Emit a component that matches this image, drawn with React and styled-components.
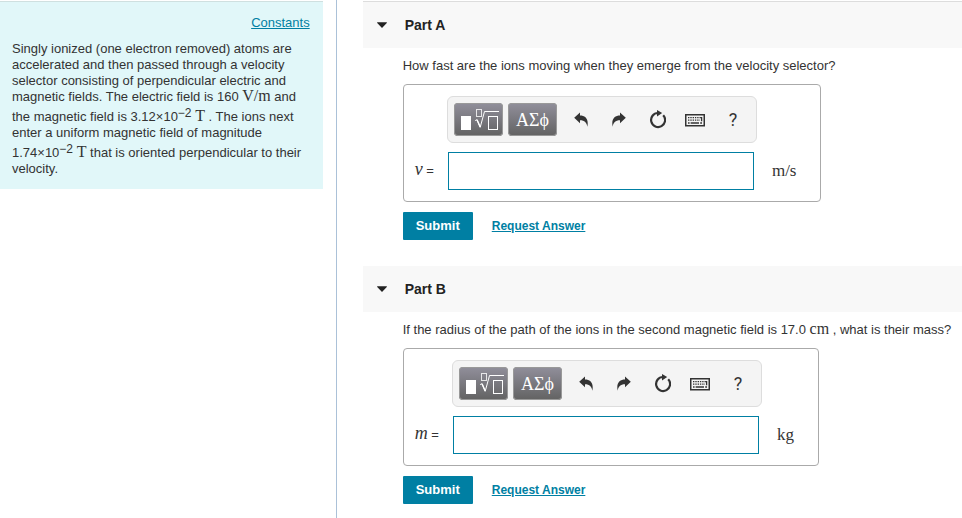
import React from 'react';
import styled, { createGlobalStyle } from 'styled-components';

const sans = '"Liberation Sans", Arial, sans-serif';
const serif = '"Liberation Serif", "Times New Roman", serif';

//

const UndoIcon = () => (
  <svg width="14" height="16" viewBox="0 0 14 16" aria-hidden="true">
    <path
      fill="currentColor"
      d="M0.2 5.7L6 0.4v3.2c5.2 0 9 3.4 7.3 11.2C12.8 10.6 10.6 8.2 6 8.2v3z"
    />
  </svg>
);

const RedoIcon = () => (
  <svg width="14" height="16" viewBox="0 0 14 16" aria-hidden="true">
    <path
      fill="currentColor"
      d="M13.8 5.7L8 0.4v3.2c-5.2 0-9 3.4-7.3 11.2C1.2 10.6 3.4 8.2 8 8.2v3z"
    />
  </svg>
);

const ResetIcon = () => (
  <svg width="18" height="20" viewBox="-1 1 18 20" aria-hidden="true">
    <path
      fill="none"
      stroke="currentColor"
      strokeWidth="2.2"
      d="M14.2 6.2A7 7 0 1 1 9 4"
    />
    <path fill="currentColor" d="M8 1l5.2 3L8 7.4z" />
  </svg>
);

const KeyboardIcon = () => (
  <svg width="20" height="15" viewBox="0 -2 20 15" aria-hidden="true">
    <rect
      x="0.75"
      y="0.75"
      width="18.5"
      height="11"
      fill="none"
      stroke="currentColor"
      strokeWidth="1.5"
    />
    <g fill="none" stroke="currentColor" strokeWidth="1.3">
      <path strokeDasharray="1.4 0.9" d="M3 3.6h13" />
      <path strokeDasharray="1.4 0.9" d="M3 6.2h12" />
      <path d="M16.6 3v4.2M3 9h1.6M5.6 9h8.4M15.2 9h1.8" />
    </g>
  </svg>
);

const TemplateIcon = () => (
  <svg width="49" height="33" viewBox="0 0 49 33" aria-hidden="true">
    <rect x="7" y="13" width="10" height="14" fill="#fff" />
    <g fill="none" stroke="#fff">
      <rect x="22.5" y="6.5" width="5" height="7" strokeOpacity="0.8" />
      <path d="M21.2 17.6l1.8-0.9 3.2 7.6L30.5 8.5H45" />
      <path strokeWidth="1.4" d="M23 16.8l3.2 7.2" />
      <rect x="34.5" y="13.5" width="9" height="13" />
    </g>
  </svg>
);

const CaretIcon = () => (
  <svg width="10" height="6" viewBox="0 0 10 6" aria-hidden="true">
    <path
      fill="currentColor"
      d="M0.4 0.2h9.2q0.6 0.2 0.2 0.7L5 5.9 0.2 0.9q-0.4-0.5 0.2-0.7z"
    />
  </svg>
);

//

const Part = ({ id, title, variable, unit, ruled, children }) => (
  <section>
    <PartHeader $ruled={ruled}>
      <Toggle type="button" aria-label={`Collapse ${title}`}>
        <CaretIcon />
      </Toggle>
      <PartTitle>{title}</PartTitle>
    </PartHeader>

    <PartBody>
      <Question>{children}</Question>

      <AnswerBox>
        <Toolbar>
          <PaletteButton type="button" aria-label="Templates">
            <TemplateIcon />
          </PaletteButton>
          <PaletteButton type="button">ΑΣϕ</PaletteButton>
          <Tools>
            <ToolButton type="button" aria-label="Undo">
              <UndoIcon />
            </ToolButton>
            <ToolButton type="button" aria-label="Redo">
              <RedoIcon />
            </ToolButton>
            <ToolButton type="button" aria-label="Reset">
              <ResetIcon />
            </ToolButton>
            <ToolButton type="button" aria-label="Keyboard shortcuts">
              <KeyboardIcon />
            </ToolButton>
            <ToolButton type="button">?</ToolButton>
          </Tools>
        </Toolbar>
        <AnswerLabel htmlFor={id}>
          <i>{variable}</i> =
        </AnswerLabel>
        <AnswerInput id={id} type="text" />
        <AnswerUnit>{unit}</AnswerUnit>
      </AnswerBox>

      <Actions>
        <Submit type="submit">Submit</Submit>
        <RequestLink href="#request">Request Answer</RequestLink>
      </Actions>
    </PartBody>
  </section>
);

const App = () => (
  <>
    <GlobalStyle />
    <Page>
      <Sidebar>
        <Problem>
          <ConstantsRow>
            <Link href="#constants">Constants</Link>
          </ConstantsRow>
          <ProblemText>
            Singly ionized (one electron removed) atoms are accelerated and then
            passed through a velocity selector consisting of perpendicular
            electric and magnetic fields. The electric field is 160{' '}
            <Unit>V/m</Unit> and the magnetic field is 3.12×10<Sup>−2</Sup>{' '}
            <Unit>T</Unit> . The ions next enter a uniform magnetic field of
            magnitude 1.74×10<Sup>−2</Sup> <Unit>T</Unit> that is oriented
            perpendicular to their velocity.
          </ProblemText>
        </Problem>
      </Sidebar>

      <Main>
        <Part id="answer-a" title="Part A" variable="v" unit="m/s" ruled>
          How fast are the ions moving when they emerge from the velocity
          selector?
        </Part>
        <Part id="answer-b" title="Part B" variable="m" unit="kg">
          If the radius of the path of the ions in the second magnetic field is
          17.0 <Unit>cm</Unit> , what is their mass?
        </Part>
      </Main>
    </Page>
  </>
);

export default App;

//

const GlobalStyle = createGlobalStyle`
  * {
    box-sizing: border-box;
  }

  body {
    margin: 0;
    background-color: #fff;
    color: #333;
    font-family: ${sans};
    font-size: 13px;
    line-height: 16px;
  }

  button,
  input {
    font: inherit;
  }
`;

const Page = styled.div`
  display: flex;
  min-height: 100vh;
`;

const Sidebar = styled.aside`
  flex: 0 0 35%;
  padding: 1px 13px 0 0;
  border-right: 1px solid #abc1d8;
`;

const Problem = styled.section`
  padding: 13px 12px 12px;
  border-top: 1px solid #cfe0e0;
  background-color: #e1f7f9;
`;

const ConstantsRow = styled.div`
  margin-bottom: 10px;
  padding-right: 1px;
  text-align: right;
`;

const Link = styled.a`
  color: #007fa3;
`;

const ProblemText = styled.p`
  margin: 0;
`;

const Unit = styled.span`
  font-family: ${serif};
  font-size: 16px;
  line-height: 0;
`;

const Sup = styled.sup`
  font-size: 12px;
  line-height: 16px;
  vertical-align: 4px;
`;

const Main = styled.main`
  display: flex;
  flex: 1;
  flex-direction: column;
  gap: 26px;
  min-width: 0;
  padding: 1px 0 12px 26px;
`;

const PartHeader = styled.header`
  display: flex;
  align-items: center;
  gap: 13px;
  padding: 15px 9px;
  border-top: ${({ $ruled }) => ($ruled ? '1px solid #ddd' : 'none')};
  background-color: #f8f8f8;
`;

const Toggle = styled.button`
  display: flex;
  padding: 5px;
  border: 0;
  background: none;
  color: #222;
  cursor: pointer;
`;

const PartTitle = styled.h2`
  margin: 0;
  color: #222;
  font-size: 14px;
  line-height: 16px;
`;

const PartBody = styled.div`
  padding: 10px 0 0 40px;
`;

const Question = styled.p`
  margin: 0 0 10px;
`;

const AnswerBox = styled.div`
  display: inline-grid;
  grid-template-columns: auto 310px auto;
  row-gap: 9px;
  align-items: center;
  padding: 11px 24px 11px 11px;
  border: 1px solid #aaa;
  border-radius: 4px;
  vertical-align: top;
`;

const Toolbar = styled.div`
  display: flex;
  grid-column: 2;
  gap: 5px;
  padding: 6px 0 6px 6px;
  border: 1px solid #ddd;
  border-radius: 6px;
  background-color: #f4f4f4;
`;

const PaletteButton = styled.button`
  display: flex;
  flex: none;
  align-items: center;
  justify-content: center;
  width: 49px;
  height: 33px;
  padding: 0;
  border: 0;
  border-radius: 4px;
  box-shadow: inset 0 0 0 1px #999;
  background: linear-gradient(#918f9b, #626262);
  color: #fff;
  font-family: ${serif};
  font-size: 18px;
  cursor: pointer;
`;

const Tools = styled.div`
  display: flex;
`;

const ToolButton = styled.button`
  display: flex;
  align-items: center;
  justify-content: center;
  width: 38px;
  height: 33px;
  padding: 0;
  border: 0;
  background: none;
  color: #333;
  font-family: Roboto, sans-serif;
  font-size: 18px;
  cursor: pointer;
`;

const AnswerLabel = styled.label`
  grid-column: 1;
  padding-right: 13px;

  i {
    font-family: ${serif};
    font-size: 18px;
    line-height: 0;
  }
`;

const AnswerInput = styled.input`
  width: 306px;
  height: 38px;
  margin-left: 1px;
  padding: 0 8px;
  border: 1px solid #007fa3;
  border-radius: 0;
  background-color: #fff;
`;

const AnswerUnit = styled.span`
  padding-left: 15px;
  font-family: ${serif};
  font-size: 17px;
`;

const Actions = styled.div`
  display: flex;
  align-items: center;
  gap: 19px;
  margin-top: 10px;
`;

const Submit = styled.button`
  height: 28px;
  padding: 0 13px;
  border: 0;
  border-radius: 1px;
  background-color: #007fa3;
  color: #fff;
  font-weight: bold;
  cursor: pointer;
`;

const RequestLink = styled(Link)`
  font-size: 12px;
  font-weight: bold;
`;
